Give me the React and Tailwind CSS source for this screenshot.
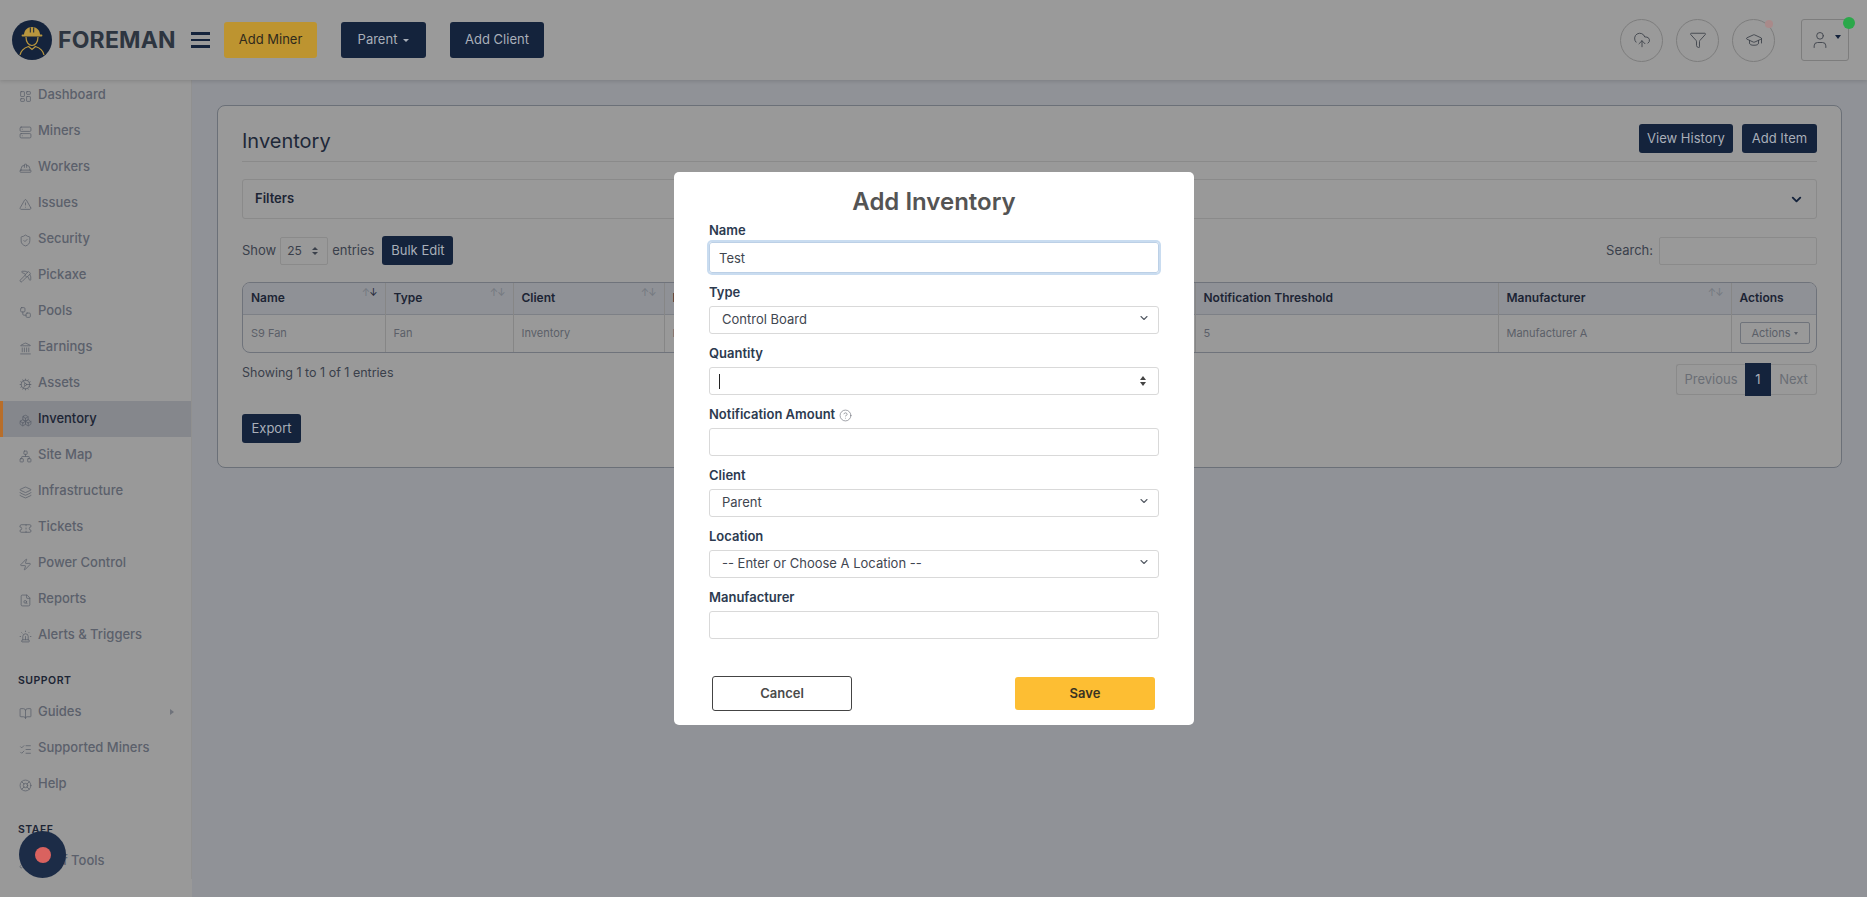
import React from "react";
import {
  LayoutDashboard, Server, HardHat, TriangleAlert, ShieldCheck, Pickaxe, Workflow, Landmark, Cog, Boxes,
  Network, Layers, Ticket, Zap, FileSearch, Siren, BookOpen, ListChecks, LifeBuoy, Wrench,
  CloudUpload, Funnel, GraduationCap, User, ChevronDown, CircleHelp,
} from "lucide-react";

const NAV_MAIN = [
  { label: "Dashboard", icon: LayoutDashboard },
  { label: "Miners", icon: Server },
  { label: "Workers", icon: HardHat },
  { label: "Issues", icon: TriangleAlert },
  { label: "Security", icon: ShieldCheck },
  { label: "Pickaxe", icon: Pickaxe },
  { label: "Pools", icon: Workflow },
  { label: "Earnings", icon: Landmark },
  { label: "Assets", icon: Cog },
  { label: "Inventory", icon: Boxes, active: true },
  { label: "Site Map", icon: Network },
  { label: "Infrastructure", icon: Layers },
  { label: "Tickets", icon: Ticket },
  { label: "Power Control", icon: Zap },
  { label: "Reports", icon: FileSearch },
  { label: "Alerts & Triggers", icon: Siren },
];

const NAV_SUPPORT = [
  { label: "Guides", icon: BookOpen, caret: true },
  { label: "Supported Miners", icon: ListChecks },
  { label: "Help", icon: LifeBuoy },
];

const DARK_BTN = "bg-[#14233c] text-[#a9afb9] rounded-[3px] text-[13px] flex items-center justify-center";

function Logo() {
  return (
    <svg viewBox="0 0 40 40" className="w-[40px] h-[40px] shrink-0">
      <circle cx="20" cy="20" r="20" fill="#14233c" />
      <path d="M12 15c0-5 3.5-8 8-8s8 3 8 8z" fill="#b8963e" />
      <path d="M10.5 15.5h19" stroke="#b8963e" strokeWidth="1.8" strokeLinecap="round" />
      <path d="M18.3 7.5v5M21.7 7.5v5" stroke="#14233c" strokeWidth="1" />
      <path d="M14 17c0 5 2.5 8.5 6 8.5s6-3.500 6-8.500" fill="none" stroke="#b8963e" strokeWidth="1.2" />
      <path d="M8 35c1-5 4-7 8.500-8.500l3.500 3 3.500-3C28 28 31 30 32 35" fill="none" stroke="#b8963e" strokeWidth="1.2" />
    </svg>
  );
}

function NavItem({ item }) {
  const Icon = item.icon;
  return (
    <div
      className={
        "h-9 shrink-0 flex items-center pl-[19px] pr-[19px] text-[13px] font-medium border-l-0 relative " +
        (item.active ? "bg-[#85878c] text-[#1c2434]" : "text-[#5b606b]")
      }
    >
      {item.active && <span className="absolute left-0 top-0 bottom-0 w-[3px] bg-[#b86e2a]" />}
      <Icon size={13} strokeWidth={1.4} className="shrink-0 mt-[3px] text-[#5b606b]" />
      <span className="ml-[6px]">{item.label}</span>
      {item.caret && <span className="ml-auto w-0 h-0 border-y-[3px] border-y-transparent border-l-[4px] border-l-[#6f737b] mr-[-2px]" />}
    </div>
  );
}

function NavHeading({ children }) {
  return (
    <div className="h-[41px] shrink-0 flex items-end pb-[5px] pl-[18px] text-[10.5px] font-semibold tracking-[0.5px] text-[#1c2434]">
      {children}
    </div>
  );
}

function Sidebar() {
  return (
    <aside className="w-[192px] shrink-0 bg-[#999999] overflow-hidden">
      <div className="-mt-[3.5px] flex flex-col border-r border-[#909090] mr-[6px] w-[192px]">
        {NAV_MAIN.map((item) => <NavItem key={item.label} item={item} />)}
        <NavHeading>SUPPORT</NavHeading>
        {NAV_SUPPORT.map((item) => <NavItem key={item.label} item={item} />)}
        <NavHeading>STAFF</NavHeading>
        <NavItem item={{ label: "Staff Tools", icon: Wrench }} />
      </div>
    </aside>
  );
}

function CircleBtn({ icon: Icon }) {
  return (
    <div className="w-[43px] h-[43px] rounded-full border border-[#7d7d7d] flex items-center justify-center text-[#3e434b]">
      <Icon size={18} strokeWidth={1.2} />
    </div>
  );
}

function Header() {
  return (
    <header className="h-20 shrink-0 bg-[#9a9a9a] shadow-[0_1px_4px_rgba(0,0,0,0.15)] flex items-center pl-3 pr-[18px] relative z-10">
      <Logo />
      <span className="ml-[6px] text-[23px] leading-none font-bold text-[#2d3540] tracking-[0.2px] w-[124px]" style={{ fontFamily: "Inter, sans-serif" }}>FOREMAN</span>
      <div className="ml-[9px] w-[19px] flex flex-col gap-[4px]">
        <span className="h-[2.5px] bg-[#14233c]" />
        <span className="h-[2.5px] bg-[#14233c]" />
        <span className="h-[2.5px] bg-[#14233c]" />
      </div>
      <button className="ml-[14px] w-[93px] h-9 rounded-[3px] bg-[#bd9430] text-[13px] text-[#2f2a1c]">Add Miner</button>
      <button className={"ml-6 w-[85px] h-9 gap-[6px] " + DARK_BTN}>
        Parent
        <span className="w-0 h-0 border-x-[3px] border-x-transparent border-t-[3px] border-t-[#a9afb9]" />
      </button>
      <button className={"ml-6 w-[94px] h-9 " + DARK_BTN}>Add Client</button>
      <div className="ml-auto flex items-center gap-[13px]">
        <CircleBtn icon={CloudUpload} />
        <CircleBtn icon={Funnel} />
        <div className="relative">
          <CircleBtn icon={GraduationCap} />
          <span className="absolute right-[2px] top-[1px] w-[8px] h-[8px] rounded-full bg-[#a98a8a]" />
        </div>
        <div className="relative ml-[13px] w-[48px] h-[42px] rounded-[3px] border border-[#7d7d7d] flex items-center justify-center gap-[5px] text-[#3e434b]">
          <User size={20} strokeWidth={1.1} />
          <span className="w-0 h-0 border-x-[3.500px] border-x-transparent border-t-[4px] border-t-[#14233c] mb-[6px]" />
          <span className="absolute -right-[7px] -top-[3px] w-3 h-3 rounded-full bg-[#2ba84a]" />
        </div>
      </div>
    </header>
  );
}

function SortCell({ label, width, dark, noSort }) {
  return (
    <th className="relative text-left align-middle font-semibold text-[12px] text-[#1c2434] px-2 border-r border-[#868686] last:border-r-0" style={{ width }}>
      {label}
      {!noSort && (
        <span className="absolute right-2 top-[2px] text-[10px] font-normal text-[#73787f] tracking-[-1px]">
          ↑<span className={dark ? "text-[#1c2434]" : ""}>↓</span>
        </span>
      )}
    </th>
  );
}

function InventoryCard() {
  return (
    <section className="rounded-lg border border-[#6b7078] bg-[#999999] pt-[18px] px-6 pb-6">
      <div className="flex items-center justify-between border-b border-[#8a8a8a] h-[38px] pb-[8px]">
        <h1 className="text-[20px] leading-none text-[#1e2838] mt-[4px]">Inventory</h1>
        <div className="flex gap-[9px]">
          <button className={"w-[94px] h-[29px] " + DARK_BTN}>View History</button>
          <button className={"w-[75px] h-[29px] " + DARK_BTN}>Add Item</button>
        </div>
      </div>

      <div className="mt-[17px] h-10 border border-[#8a8a8a] rounded-[3px] flex items-center justify-between pl-[12px] pr-[12px]">
        <span className="text-[13px] font-semibold text-[#1c2434]">Filters</span>
        <ChevronDown size={15} strokeWidth={3} className="text-[#14233c]" />
      </div>

      <div className="mt-[17px] flex items-center h-[29px] text-[13px] text-[#3a404b]">
        <span>Show</span>
        <div className="ml-[4px] w-[48px] h-[28px] border border-[#8a8a8a] rounded-[2px] flex items-center justify-between pl-[6px] pr-[9px] text-[12px]">
          25
          <span className="flex flex-col gap-[2px]">
            <span className="w-0 h-0 border-x-[3px] border-x-transparent border-b-[3px] border-b-[#3a404b]" />
            <span className="w-0 h-0 border-x-[3px] border-x-transparent border-t-[3px] border-t-[#3a404b]" />
          </span>
        </div>
        <span className="ml-[4px]">entries</span>
        <button className={"ml-[8px] w-[71px] h-[29px] " + DARK_BTN}>Bulk Edit</button>
        <span className="ml-auto mr-[6px]">Search:</span>
        <div className="w-[158px] h-[28px] border border-[#8a8a8a] rounded-[2px]" />
      </div>

      <div className="mt-[17px] rounded-lg border border-[#6f737b] overflow-hidden">
        <table className="w-full table-fixed border-collapse">
          <thead>
            <tr className="h-[31px] bg-[#8f9196] border-b border-[#7d8086]">
              <SortCell label="Name" width={142} dark />
              <SortCell label="Type" width={128} />
              <SortCell label="Client" width={151} />
              <SortCell label="Location" width={250} />
              <SortCell label="Quantity" width={281} />
              <SortCell label="Notification Threshold" width={303} noSort />
              <SortCell label="Manufacturer" width={233} />
              <SortCell label="Actions" noSort />
            </tr>
          </thead>
          <tbody>
            <tr className="h-[38px] text-[11px] text-[#5b5f68]">
              <td className="px-2 border-r border-[#868686]">S9 Fan</td>
              <td className="px-2 border-r border-[#868686]">Fan</td>
              <td className="px-2 border-r border-[#868686]">Inventory</td>
              <td className="px-2 border-r border-[#868686]">Location A</td>
              <td className="px-2 border-r border-[#868686]">10</td>
              <td className="px-2 border-r border-[#868686]">5</td>
              <td className="px-2 border-r border-[#868686]">Manufacturer A</td>
              <td className="px-2">
                <button className="w-[70px] h-[22px] border border-[#6f737b] rounded-[2px] flex items-center justify-center gap-[3px]">
                  Actions
                  <span className="w-0 h-0 border-x-[2.500px] border-x-transparent border-t-[3px] border-t-[#5b5f68]" />
                </button>
              </td>
            </tr>
          </tbody>
        </table>
      </div>

      <div className="mt-[10px] flex items-start justify-between">
        <span className="text-[12.5px] text-[#3a404b] mt-[1px]">Showing 1 to 1 of 1 entries</span>
        <div className="flex items-center h-[33px] text-[13px] text-[#6a6e75]">
          <span className="h-[31px] w-[69px] border border-[#8a8a8a] border-r-0 rounded-l-[3px] flex items-center justify-center">Previous</span>
          <span className="h-[33px] w-[26px] bg-[#14233c] text-[#a9afb9] flex items-center justify-center">1</span>
          <span className="h-[31px] w-[46px] border border-[#8a8a8a] border-l-0 rounded-r-[3px] flex items-center justify-center">Next</span>
        </div>
      </div>

      <button className={"mt-[18px] w-[59px] h-[29px] " + DARK_BTN}>Export</button>
    </section>
  );
}

const inputCls = "block w-full h-[28px] border border-[#d9d9d9] rounded-[3px] bg-white text-[13px] text-[#3f4650] outline-none";

function Field({ label, hint, children, className = "" }) {
  return (
    <div className={className}>
      <label className="flex items-center gap-[4px] h-[16px] mb-[5px] text-[13px] font-semibold text-[#2c3a4f]">
        {label}
        {hint && <CircleHelp size={13} strokeWidth={1.2} className="text-[#6f737b]" />}
      </label>
      {children}
    </div>
  );
}

function SelectField({ label, value }) {
  return (
    <Field label={label} className="mt-[12px]">
      <div className="relative">
        <select defaultValue={value} className={inputCls + " appearance-none pl-[12px] pr-8"}>
          <option>{value}</option>
        </select>
        <ChevronDown size={12} strokeWidth={2.2} className="absolute right-[9px] top-[6px] text-[#555b64]" />
      </div>
    </Field>
  );
}

function AddInventoryModal() {
  return (
    <div className="fixed left-[674px] top-[172px] w-[520px] h-[553px] bg-white rounded-[5px] z-40 px-[35px] pt-[16px]">
      <h2 className="text-center text-[24px] leading-[28px] font-semibold text-[#545454]">Add Inventory</h2>
      <div className="mt-[7px]">
        <Field label="Name">
          <input
            defaultValue="Test"
            className="block w-full h-[31px] -mt-[2px] border border-[#bcd0e6] rounded-[3px] shadow-[0_0_0_2px_#c9dcf0] px-[9px] text-[13px] text-[#3f4650] outline-none"
          />
        </Field>
        <SelectField label="Type" value="Control Board" />
        <Field label="Quantity" className="mt-[12px]">
          <div className={inputCls + " flex items-center justify-between pl-[9px] pr-[12px]"}>
            <span className="w-px h-[15px] bg-[#222222]" />
            <span className="flex flex-col gap-[2px]">
              <span className="w-0 h-0 border-x-[3.500px] border-x-transparent border-b-[4px] border-b-[#444444]" />
              <span className="w-0 h-0 border-x-[3.500px] border-x-transparent border-t-[4px] border-t-[#444444]" />
            </span>
          </div>
        </Field>
        <Field label="Notification Amount" hint className="mt-[12px]">
          <input className={inputCls + " px-[9px]"} />
        </Field>
        <SelectField label="Client" value="Parent" />
        <SelectField label="Location" value="-- Enter or Choose A Location --" />
        <Field label="Manufacturer" className="mt-[12px]">
          <input className={inputCls + " px-[9px]"} />
        </Field>
      </div>
      <div className="mt-[37px] flex items-center justify-between px-[3px]">
        <button className="w-[140px] h-[35px] rounded-[3px] border border-[#444444] text-[13px] font-semibold text-[#4a4a4a]">Cancel</button>
        <button className="w-[140px] h-[33px] rounded-[3px] bg-[#fdbe33] text-[13px] font-semibold text-[#3a3322] mr-[1px]">Save</button>
      </div>
    </div>
  );
}

export default function App() {
  return (
    <div className="h-screen w-full overflow-hidden flex flex-col bg-[#909297]" style={{ fontFamily: "Inter, 'Noto Sans', sans-serif" }}>
      <Header />
      <div className="flex-1 flex min-h-0">
        <Sidebar />
        <main className="flex-1 pt-[25px] px-[25px] bg-[#909297]">
          <InventoryCard />
        </main>
      </div>
      <AddInventoryModal />
      {/* floating recorder button */}
      <div className="fixed left-[19px] top-[831px] w-[47px] h-[47px] rounded-full bg-[#1c2c47] flex items-center justify-center z-50">
        <span className="w-4 h-4 rounded-full bg-[#d9625f]" />
      </div>
    </div>
  );
}
